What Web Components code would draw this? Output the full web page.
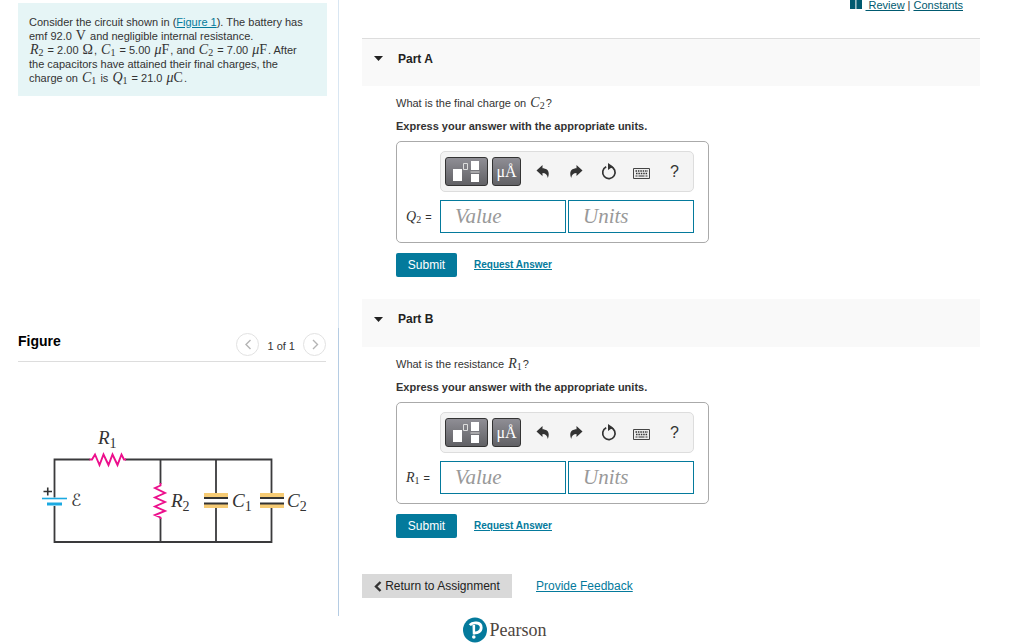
<!DOCTYPE html>
<html lang="en">
<head>
<meta charset="utf-8">
<title>Circuit problem</title>
<style>
  body {
    margin: 0;
    padding-right: 15px;
    background: #fff;
    color: #333;
    font: 11px/14px "Liberation Sans", Arial, sans-serif;
  }
</style>
</head>
<body>
<problem-page>
  <problem-intro slot="side">
    Consider the circuit shown in (<text-link>Figure 1</text-link>). The battery has<br>
    emf 92.0 <math-var unit="V"></math-var> and negligible internal resistance.<br>
    <math-var name="R" sub="2"></math-var> = 2.00 <math-var unit="Ω"></math-var>, <math-var name="C" sub="1"></math-var> = 5.00 <math-var name="μ" unit="F"></math-var>, and <math-var name="C" sub="2"></math-var> = 7.00 <math-var name="μ" unit="F"></math-var>. After<br>
    the capacitors have attained their final charges, the<br>
    charge on <math-var name="C" sub="1"></math-var> is <math-var name="Q" sub="1"></math-var> = 21.0 <math-var name="μ" unit="C"></math-var>.
  </problem-intro>
  <figure-panel slot="side"><circuit-diagram></circuit-diagram></figure-panel>
  <top-links></top-links>
  <problem-part heading="Part A" name="Q" sub="2" ruled>
    What is the final charge on <math-var name="C" sub="2"></math-var>?
  </problem-part>
  <problem-part heading="Part B" name="R" sub="1">
    What is the resistance <math-var name="R" sub="1"></math-var>?
  </problem-part>
  <page-actions></page-actions>
</problem-page>
<brand-footer></brand-footer>

<script>
class BaseElement extends HTMLElement {
  connectedCallback() {
    if (this.shadowRoot) return;
    this.attachShadow({ mode: "open" });
    this.shadowRoot.innerHTML = this.render();
  }

  attr(name) {
    return this.getAttribute(name) || "";
  }
}

class ProblemPage extends BaseElement {
  render() {
    return `
    <style>
      :host {
        display: grid;
        grid-template-columns: minmax(339px, 1fr) minmax(0, 2fr);
      }
      aside {
        display: flex;
        flex-direction: column;
      }
      main {
        padding: 0 29px 18px 23px;
      }
    </style>
    <aside><slot name="side"></slot></aside>
    <main><slot></slot></main>
  `;
  }
}

class TextLink extends BaseElement {
  render() {
    return `<style>
      a { color: #047a9c; text-decoration: underline; }
    </style><a href="#"><slot></slot></a>`;
  }
}

// italic variable with an optional subscript, then an upright unit
class MathVar extends BaseElement {
  render() {
    const sub = this.attr("sub");
    return `<style>
      :host {
        margin: 0 1px;
        font-family: "Liberation Serif", "Times New Roman", serif;
        font-size: 14px;
        line-height: 1px;
      }
      sub {
        font-size: 10px;
        line-height: 1px;
        vertical-align: -2px;
      }
    </style><i>${this.attr("name")}</i>${this.attr("unit")}${sub ? `<sub>${sub}</sub>` : ""}`;
  }
}

class ProblemIntro extends BaseElement {
  render() {
    return `
    <style>
      :host {
        display: block;
        flex: 1;
        padding: 3px 11px 0 18px;
        border-right: 1px solid #d9e6f2;
      }
      div {
        padding: 12px 0 11px 11px;
        background: #e6f5f6;
        white-space: nowrap;
      }
    </style>
    <div><slot></slot></div>
  `;
  }
}

class FigurePanel extends BaseElement {
  render() {
    return `
    <style>
      :host {
        display: block;
        height: 288px;
        padding: 0 12px 0 18px;
        border-right: 1px solid #b5cce3;
        box-sizing: border-box;
      }
      header {
        display: flex;
        align-items: center;
        justify-content: space-between;
        height: 33px;
        border-bottom: 1px solid #ddd;
      }
      h2 {
        margin: 0;
        padding-bottom: 8px;
        color: #000;
        font-size: 14px;
      }
      nav {
        display: flex;
        align-items: center;
        gap: 8px;
      }
      span { padding-top: 3px; }
      button {
        display: grid;
        place-items: center;
        width: 23px;
        height: 23px;
        padding: 0;
        border: 1px solid #e2e2e2;
        border-radius: 50%;
        background: #fff;
      }
      path { fill: none; stroke: #b4b4b4; stroke-width: 1.4; }
    </style>
    <header>
      <h2>Figure</h2>
      <nav>
        <button aria-label="Previous figure"><svg width="8" height="11"><path d="M6.500 1 2 5.500l4.500 4.500"/></svg></button>
        <span>1 of 1</span>
        <button aria-label="Next figure"><svg width="8" height="11"><path d="M2 1l4.500 4.500L2 10"/></svg></button>
      </nav>
    </header>
    <slot></slot>
  `;
  }
}

class CircuitDiagram extends BaseElement {
  render() {
    return `
    <style>
      :host { display: block; padding-top: 54px; }
      svg { display: block; }
      text {
        fill: #333;
        font: italic 19px "Liberation Serif", "Times New Roman", serif;
      }
      .sub { font-size: 14px; font-style: normal; }
      .emf { font: 17px "DejaVu Sans", sans-serif; }
      .wire { fill: none; stroke: #3a3a3c; stroke-width: 1.8; }
      .resistor { fill: none; stroke: #ec0f8c; stroke-width: 1.9; stroke-linejoin: miter; }
      .plate { stroke: #333; stroke-width: 2; }
      .glow { fill: #f6cb74; }
    </style>
    <svg width="308" height="144" viewBox="18 416 308 144" role="img" aria-label="Circuit diagram">
      <path class="wire" d="M54.500 497.500V459.500H90M125 459.500H271.500V496M54.500 506V542H271.500V504M160.500 459.500V484M160.500 518V542M216 459.500V496M216 504V542"/>
      <path class="resistor" d="M89.500 459.500H92L95 454.500 99.500 465 103.500 454.500 108.500 465 112.500 454.500 117.500 465 121.500 454.500 124 459.500H126"/>
      <path class="resistor" d="M160.500 483V485.500L155 488 165 493 155 497.500 165 502 155 506.500 165 511 155 515 160.500 517.500V519"/>
      <path d="M42 498.500H67" stroke="#1ba9e1" stroke-width="1.6"/>
      <path d="M47 504H62" stroke="#1ba9e1" stroke-width="3"/>
      <path d="M43.500 491.500H52M47.750 487.500V495.500" stroke="#333" stroke-width="1.6"/>
      <rect class="glow" x="204" y="493" width="24" height="4"/>
      <rect class="glow" x="204" y="504" width="24" height="4"/>
      <path class="plate" d="M204 498H228M204 503.500H228"/>
      <rect class="glow" x="260" y="493" width="24" height="4"/>
      <rect class="glow" x="260" y="504" width="24" height="4"/>
      <path class="plate" d="M260 498H284M260 503.500H284"/>
      <text x="98" y="444">R<tspan class="sub" dy="4">1</tspan></text>
      <text class="emf" x="71" y="506">ℰ</text>
      <text x="171" y="507">R<tspan class="sub" dy="4">2</tspan></text>
      <text x="232" y="507">C<tspan class="sub" dy="4">1</tspan></text>
      <text x="287" y="507">C<tspan class="sub" dy="4">2</tspan></text>
    </svg>
  `;
  }
}

class TopLinks extends BaseElement {
  render() {
    return `
    <style>
      :host {
        display: flex;
        justify-content: flex-end;
        gap: 3px;
        height: 38px;
        padding-right: 17px;
        line-height: 10px;
      }
      a { color: #005a70; }
    </style>
    <svg width="12" height="10"><path fill="#005a70" d="M0 0h5.400v9H0zM6.400 0H12v9H6.400z"/></svg>
    <a href="#">&nbsp;Review</a><span>|</span><a href="#">Constants</a>
  `;
  }
}

class AnswerToolbar extends BaseElement {
  render() {
    return `
    <style>
      :host {
        display: flex;
        align-items: center;
        gap: 4px;
        height: 41px;
        padding: 0 4px;
        box-sizing: border-box;
        border: 1px solid #ddd;
        border-radius: 5px;
        background: #f4f4f4;
      }
      button {
        display: grid;
        place-items: center;
        width: 29px;
        height: 29px;
        padding: 0;
        border: 0;
        background: none;
        color: #333;
      }
      .dark {
        border: 1px solid #333;
        border-radius: 3px;
        background: linear-gradient(#8f8e95, #616165);
        color: #fff;
        font: 16px "Liberation Serif", serif;
      }
      .wide { width: 43px; }
      .dark + button:not(.dark) { margin-left: 3px; }
      .help { font: 16px "Liberation Sans", sans-serif; }
      svg { fill: #333; }
    </style>
    <button class="dark wide" aria-label="Templates">
      <svg width="30" height="24">
        <path fill="#fff" d="M1 9h9v12H1zM19 1h8v9h-8zM19 14h8v8h-8z"/>
        <path fill="#ccc" d="M18.500 11.400h9v1.200h-9z"/>
        <path fill="none" stroke="#ddd" d="M11.500 3.500h4v6h-4z"/>
      </svg>
    </button>
    <button class="dark" aria-label="Units">μÅ</button>
    <button aria-label="Undo"><svg width="14" height="14"><path d="M.5 5.500 6.500 0v3.200C11 3.400 14.500 6 11.800 13 11.300 9.500 9.500 8 6.500 8V11z"/></svg></button>
    <button aria-label="Redo"><svg width="14" height="14"><path d="M13.500 5.500 7.500 0v3.200C3 3.400-.5 6 2.200 13 2.700 9.500 4.500 8 7.500 8V11z"/></svg></button>
    <button aria-label="Reset"><svg width="16" height="17"><path d="M9.500 3.400A6.200 6.200 0 1 1 5.200 3.800" fill="none" stroke="#333" stroke-width="1.700"/><path d="M7 0l5 3.500-5 3.500z"/></svg></button>
    <button aria-label="Keyboard"><svg width="17" height="14"><path d="M.5 3.500h16v10H.5z" fill="#eee" stroke="#444"/><path d="M2.500 6h12.500M3 8.500h12" stroke="#333" stroke-width="1.400" stroke-dasharray="1.500 .9"/><path d="M2.500 11h2M5.500 11h6M12.500 11h2" stroke="#333"/></svg></button>
    <button class="help" aria-label="Help">?</button>
  `;
  }
}

class ProblemPart extends BaseElement {
  render() {
    return `
    <style>
      :host { display: block; }
      header {
        display: flex;
        align-items: center;
        gap: 15px;
        height: 48px;
        padding: 0 12px 8px;
        box-sizing: border-box;
        background: #f9f9f9;
      }
      :host([ruled]) header { border-top: 1px solid #ddd; }
      h3 {
        margin: 0;
        color: #222;
        font-size: 12px;
      }
      header svg { fill: #222; }
      .body { padding: 9px 0 22px 34px; }
      p {
        margin: 0 0 7px;
        line-height: 16px;
      }
      .box {
        display: grid;
        grid-template-columns: 33px 126px 126px;
        gap: 8px 2px;
        width: max-content;
        padding: 9px 14px 9px 8px;
        border: 1px solid #aaa;
        border-radius: 5px;
      }
      answer-toolbar { grid-column: 2 / 4; }
      label {
        align-self: center;
        white-space: nowrap;
      }
      input {
        width: 100%;
        height: 33px;
        padding: 0 14px;
        box-sizing: border-box;
        border: 1px solid #047a9c;
        background: #fff;
        font: italic 21px "Liberation Serif", "Times New Roman", serif;
      }
      input::placeholder { color: #999; }
      .actions {
        display: flex;
        align-items: center;
        gap: 17px;
        padding-top: 10px;
      }
      button {
        width: 61px;
        height: 24px;
        padding: 0;
        border: 0;
        border-radius: 2px;
        background: #047a9c;
        color: #fff;
        font: 12px "Liberation Sans", sans-serif;
      }
      .actions a {
        color: #047a9c;
        font-size: 10px;
        font-weight: bold;
      }
    </style>
    <header>
      <svg width="9" height="5"><path d="M0 0h9L4.500 5z"/></svg>
      <h3>${this.attr("heading")}</h3>
    </header>
    <div class="body">
      <p><slot></slot></p>
      <p><b>Express your answer with the appropriate units.</b></p>
      <div class="box">
        <answer-toolbar></answer-toolbar>
        <label for="value"><math-var name="${this.attr("name")}" sub="${this.attr("sub")}"></math-var> =</label>
        <input id="value" placeholder="Value">
        <input aria-label="Units" placeholder="Units">
      </div>
      <div class="actions">
        <button>Submit</button>
        <a href="#">Request Answer</a>
      </div>
    </div>
  `;
  }
}

class PageActions extends BaseElement {
  render() {
    return `
    <style>
      :host {
        display: flex;
        align-items: center;
        gap: 24px;
        padding-top: 14px;
        font-size: 12px;
      }
      button {
        display: flex;
        align-items: center;
        justify-content: center;
        gap: 3px;
        width: 150px;
        height: 24px;
        padding: 0;
        border: 0;
        background: #d9d9d9;
        color: #222;
        font: 12px "Liberation Sans", sans-serif;
      }
      a { color: #047a9c; }
    </style>
    <button><svg width="8" height="11"><path d="M6.500 1 2 5.500l4.500 4.500" fill="none" stroke="#333" stroke-width="2.400"/></svg>Return to Assignment</button>
    <a href="#">Provide Feedback</a>
  `;
  }
}

class BrandFooter extends BaseElement {
  render() {
    return `
    <style>
      :host {
        display: flex;
        align-items: center;
        justify-content: center;
        gap: 3px;
        padding-top: 1px;
        color: #4d4640;
        font: 18px/26px "Liberation Serif", serif;
      }
    </style>
    <svg width="24" height="26">
      <ellipse cx="12" cy="13" rx="12" ry="12.500" fill="#047a9c"/>
      <path d="M6.800 8.200C9.500 5 18.200 4.800 18.200 10.400 18.200 14.600 14.500 16 11.500 15.800" fill="none" stroke="#fff" stroke-width="2.800"/>
      <path d="M9.500 8h2.600v9.500H9.800z" fill="#fff"/>
      <circle cx="10.800" cy="20" r="1.800" fill="#fff"/>
    </svg>
    <span>Pearson</span>
  `;
  }
}

customElements.define("text-link", TextLink);
customElements.define("math-var", MathVar);
customElements.define("circuit-diagram", CircuitDiagram);
customElements.define("figure-panel", FigurePanel);
customElements.define("problem-intro", ProblemIntro);
customElements.define("top-links", TopLinks);
customElements.define("answer-toolbar", AnswerToolbar);
customElements.define("problem-part", ProblemPart);
customElements.define("page-actions", PageActions);
customElements.define("brand-footer", BrandFooter);
customElements.define("problem-page", ProblemPage);
</script>
</body>
</html>
